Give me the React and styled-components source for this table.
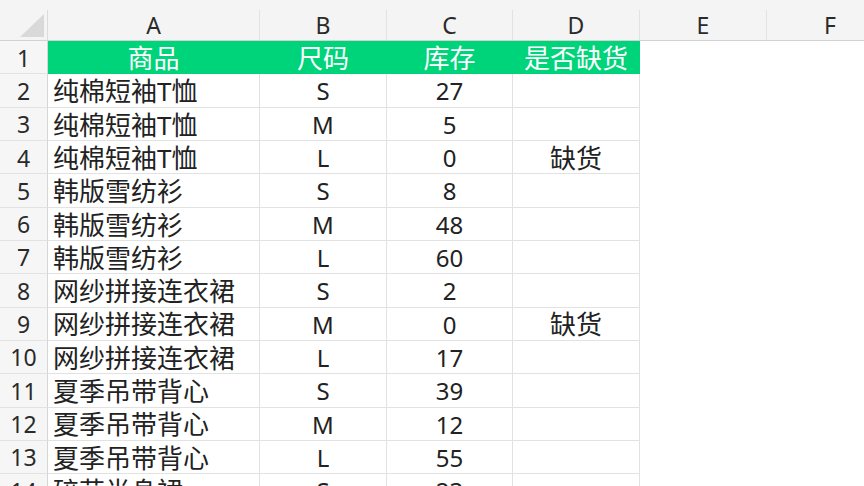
import React from "react";
import styled, { createGlobalStyle } from "styled-components";

const GlobalStyle = createGlobalStyle`
    html, body {
        margin: 0;
        padding: 0;
        background: #ffffff;
        overflow: hidden;
    }
    body {
        font-family: "Noto Sans", "Noto Sans CJK SC", sans-serif;
        color: #222222;
    }
`

const COLS = "48px 212px 127px 126px 127px 127px 127px";

const Sheet = styled.div`
    width: 864px;
    height: 486px;
    overflow: hidden;
    background: #ffffff;
`

const HeadRow = styled.div`
    display: grid;
    grid-template-columns: ${COLS};
    height: 41px;
    background: #f4f4f4;
    border-bottom: 1px solid #d2d2d2;
    box-sizing: border-box;
`

const Corner = styled.div`
    position: relative;
    border-right: 1px solid #dcdcdc;
    margin-top: 10px;
    &::after {
        content: "";
        position: absolute;
        right: 3px;
        bottom: 3px;
        width: 0;
        height: 0;
        border-left: 24px solid transparent;
        border-bottom: 23px solid #d9d9d9;
    }
`

const ColLabel = styled.div`
    margin-top: 10px;
    padding-top: 2px;
    display: flex;
    align-items: center;
    justify-content: center;
    font-size: 23px;
    line-height: 1.1;
    color: #2a2a2a;
    border-right: 1px solid #e2e2e2;
`

const Row = styled.div`
    display: grid;
    grid-template-columns: ${COLS};
    height: 33.33px;
`

const RowNum = styled.div`
    display: flex;
    align-items: center;
    justify-content: center;
    padding-top: 2px;
    background: #f6f6f6;
    border-right: 1px solid #d6d6d6;
    border-bottom: 1px solid #e2e2e2;
    font-size: 23px;
    line-height: 1.1;
    color: #2a2a2a;
    box-sizing: border-box;
`

const Cell = styled.div`
    display: flex;
    align-items: center;
    justify-content: ${(p) => (p.$left ? "flex-start" : "center")};
    padding-left: ${(p) => (p.$left ? "5px" : "0")};
    padding-top: 2px;
    font-size: ${(p) => (p.$cjk ? "26px" : "24px")};
    line-height: 1.1;
    white-space: nowrap;
    box-sizing: border-box;
    background: ${(p) => (p.$head ? "#00d47a" : "#ffffff")};
    color: ${(p) => (p.$head ? "#ffffff" : "#222222")};
    border-right: 1px solid ${(p) => (p.$head ? "#00d47a" : "#e2e2e2")};
    border-bottom: 1px solid ${(p) => (p.$head ? "#00d47a" : "#e2e2e2")};
`

const Blank = styled.div`
    background: #ffffff;
`

const columns = ["A", "B", "C", "D", "E", "F"];

const rows = [
    ["商品", "尺码", "库存", "是否缺货"],
    ["纯棉短袖T恤", "S", "27", ""],
    ["纯棉短袖T恤", "M", "5", ""],
    ["纯棉短袖T恤", "L", "0", "缺货"],
    ["韩版雪纺衫", "S", "8", ""],
    ["韩版雪纺衫", "M", "48", ""],
    ["韩版雪纺衫", "L", "60", ""],
    ["网纱拼接连衣裙", "S", "2", ""],
    ["网纱拼接连衣裙", "M", "0", "缺货"],
    ["网纱拼接连衣裙", "L", "17", ""],
    ["夏季吊带背心", "S", "39", ""],
    ["夏季吊带背心", "M", "12", ""],
    ["夏季吊带背心", "L", "55", ""],
    ["碎花半身裙", "S", "23", ""],
];

const hasCjk = (s) => /[\u4e00-\u9fff]/.test(s);

const App = () => {
    return (
        <Sheet>
            <GlobalStyle />
            <HeadRow>
                <Corner />
                {columns.map((c) => (
                    <ColLabel key={c}>{c}</ColLabel>
                ))}
            </HeadRow>
            {rows.map((r, i) => (
                <Row key={i}>
                    <RowNum>{i + 1}</RowNum>
                    {r.map((v, j) => (
                        <Cell
                            key={j}
                            $head={i === 0}
                            $left={i > 0 && j === 0}
                            $cjk={hasCjk(v)}
                        >
                            {v}
                        </Cell>
                    ))}
                    <Blank />
                    <Blank />
                </Row>
            ))}
        </Sheet>
    )
}

export default App
